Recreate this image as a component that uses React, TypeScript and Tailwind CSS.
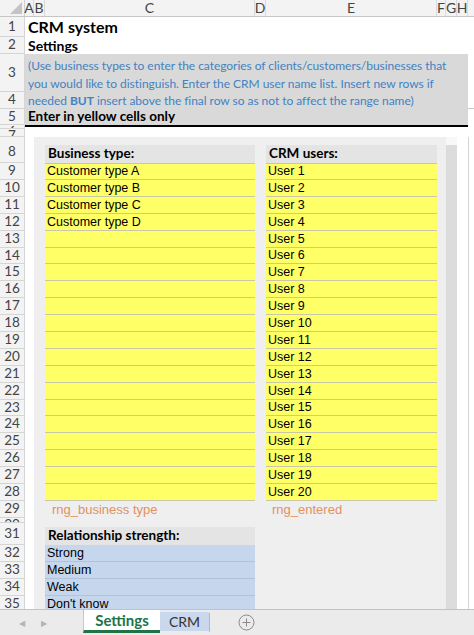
import React from "react";

function RowHead({ n, cls = "items-center" }: { n: number | string; cls?: string }) {
  return (
    <div
      className={`w-[25px] shrink-0 bg-[#f3f3f3] border-r border-b border-[#d5d5d5] text-[13.5px] leading-none text-[#444] flex justify-center overflow-hidden ${cls}`}
    >
      {n}
    </div>
  );
}

function PanelRow({
  h,
  n,
  headCls,
  c,
  e,
  gTop = false,
}: {
  h: string;
  n: number | string;
  headCls?: string;
  c?: React.ReactNode;
  e?: React.ReactNode;
  gTop?: boolean;
}) {
  return (
    <div className={`flex shrink-0 ${h}`}>
      <RowHead n={n} cls={headCls} />
      <div className="w-[9px] shrink-0 bg-white" />
      <div className="w-[11px] shrink-0 bg-[#efefef]" />
      <div className="w-[210px] shrink-0 bg-[#efefef] flex flex-col">{c}</div>
      <div className="w-[11px] shrink-0 bg-[#efefef]" />
      <div className="w-[171px] shrink-0 bg-[#efefef] flex flex-col">{e}</div>
      <div className="w-[9px] shrink-0 bg-[#efefef]" />
      <div className="w-[11px] shrink-0 flex flex-col bg-[#dcdcdc]">
        {gTop && <div className="h-[8px] bg-[#f8f8f8]" />}
      </div>
      <div className="w-[11px] shrink-0 bg-white" />
      <div className="flex-1 bg-white border-l border-[#d4d4d4]" />
    </div>
  );
}

function Yellow({ text, top = false }: { text?: string; top?: boolean }) {
  return (
    <div
      className={`flex-1 bg-[#ffff66] border-b border-[#c8c8a8] ${top ? "border-t" : ""} pl-[2px] flex items-center text-[12.5px] leading-none text-black font-['Liberation_Sans',Arial,sans-serif] whitespace-nowrap`}
    >
      {text}
    </div>
  );
}

function Blue({ text }: { text?: string }) {
  return (
    <div className="flex-1 bg-[#c6d7ed] border-b border-[#b3c3d6] pl-[2px] flex items-center text-[12.5px] leading-none text-black font-['Liberation_Sans',Arial,sans-serif] whitespace-nowrap">
      {text}
    </div>
  );
}

function HeadCell({ text }: { text: string }) {
  return (
    <>
      <div className="h-[8px] shrink-0" />
      <div className="flex-1 bg-[#e4e4e4] pl-[3px] flex items-center text-[13.5px] font-bold leading-none text-black whitespace-nowrap">
        {text}
      </div>
    </>
  );
}

export default function App() {
  const biz = ["Customer type A", "Customer type B", "Customer type C", "Customer type D"];
  const yRows = Array.from({ length: 20 }, (_, i) => i + 9);
  const blues = ["Strong", "Medium", "Weak", "Don't know"];
  return (
    <div className="w-[474px] h-[635px] overflow-hidden bg-white flex flex-col font-[Lato,sans-serif] text-black">
      <div className="h-[609px] shrink-0 overflow-hidden flex flex-col">
        {/* column headers */}
        <div className="flex h-[17px] shrink-0 bg-[#f3f3f3] border-b border-[#c6c6c6] text-[14px] leading-none text-[#444]">
          <div className="w-[25px] shrink-0 border-r border-[#d0d0d0] flex items-end justify-end pr-[2px] pb-[2px]">
            <svg width="12" height="12" viewBox="0 0 12 12">
              <polygon points="12,0 12,12 0,12" fill="#c4c4c4" />
            </svg>
          </div>
          <div className="w-[9px] shrink-0 border-r border-[#dadada] flex items-center justify-center">A</div>
          <div className="w-[11px] shrink-0 border-r border-[#dadada] flex items-center justify-center">B</div>
          <div className="w-[210px] shrink-0 border-r border-[#dadada] flex items-center justify-center">C</div>
          <div className="w-[11px] shrink-0 border-r border-[#dadada] flex items-center justify-center">D</div>
          <div className="w-[171px] shrink-0 border-r border-[#dadada] flex items-center justify-center">E</div>
          <div className="w-[9px] shrink-0 border-r border-[#dadada] flex items-center justify-center">F</div>
          <div className="w-[11px] shrink-0 border-r border-[#dadada] flex items-center justify-center">G</div>
          <div className="w-[11px] shrink-0 border-r border-[#dadada] flex items-center justify-center">H</div>
          <div className="flex-1" />
        </div>

        {/* row 1 */}
        <div className="flex h-[20px] shrink-0">
          <RowHead n={1} />
          <div className="flex-1 pl-[3px] flex items-center text-[16px] font-bold leading-none whitespace-nowrap">
            CRM system
          </div>
        </div>
        {/* row 2 */}
        <div className="flex h-[17px] shrink-0">
          <RowHead n={2} />
          <div className="flex-1 pl-[3px] flex items-center text-[14px] font-bold leading-none whitespace-nowrap">
            Settings
          </div>
        </div>
        {/* rows 3-4 */}
        <div className="flex h-[55px] shrink-0">
          <div className="flex flex-col w-[25px] shrink-0">
            <RowHead n={3} cls="items-center h-[38px]" />
            <RowHead n={4} cls="items-center h-[17px]" />
          </div>
          <div className="w-[443px] shrink-0 bg-[#d9d9d9] pl-[3px] pt-[3px] text-[12px] leading-[17.5px] text-[#4282c2] whitespace-nowrap tracking-[-0.04px]">
            <div>(Use business types to enter the categories of clients/customers/businesses that</div>
            <div>you would like to distinguish. Enter the CRM user name list. Insert new rows if</div>
            <div>
              needed <span className="font-bold">BUT</span> insert above the final row so as not to affect the range name)
            </div>
          </div>
          <div className="flex-1 border-b border-[#c8c8c8]" />
        </div>
        {/* row 5 */}
        <div className="flex h-[16px] shrink-0">
          <RowHead n={5} />
          <div className="w-[443px] shrink-0 bg-[#d9d9d9] pl-[3px] flex items-center text-[13.5px] font-bold leading-none whitespace-nowrap">
            Enter in yellow cells only
          </div>
          <div className="flex-1" />
        </div>
        {/* row 6 */}
        <div className="flex h-[4px] shrink-0">
          <RowHead n={6} cls="items-start" />
          <div className="w-[443px] shrink-0 flex flex-col">
            <div className="h-[2px] bg-black" />
          </div>
          <div className="flex-1" />
        </div>
        {/* row 7 */}
        <div className="flex h-[8px] shrink-0">
          <RowHead n={7} cls="items-start" />
          <div className="flex-1" />
        </div>
        {/* row 8 */}
        <PanelRow
          h="h-[26px]"
          n={8}
          headCls="items-end pb-[4px]"
          gTop
          c={<HeadCell text="Business type:" />}
          e={<HeadCell text="CRM users:" />}
        />
        {yRows.map((r, i) => (
          <PanelRow
            key={r}
            h={r === 14 || r === 23 ? "h-[16px]" : "h-[17px]"}
            n={r}
            c={<Yellow text={biz[i]} top={i === 0} />}
            e={<Yellow text={`User ${i + 1}`} top={i === 0} />}
          />
        ))}
        {/* row 29 */}
        <PanelRow
          h="h-[17px]"
          n={29}
          c={
            <div className="flex-1 pl-[7px] flex items-center text-[13px] leading-none text-[#e3915e] font-['Liberation_Sans',Arial,sans-serif] whitespace-nowrap">
              rng_business type
            </div>
          }
          e={
            <div className="flex-1 pl-[6px] flex items-center text-[13px] leading-none text-[#e3915e] font-['Liberation_Sans',Arial,sans-serif] whitespace-nowrap">
              rng_entered
            </div>
          }
        />
        {/* row 30 */}
        <PanelRow h="h-[5px]" n={30} headCls="items-start" />
        {/* row 31 */}
        <PanelRow
          h="h-[22px]"
          n={31}
          headCls="items-end pb-[4px]"
          c={
            <>
              <div className="h-[4px] shrink-0" />
              <div className="flex-1 bg-[#e4e4e4] pl-[3px] flex items-center text-[13.5px] font-bold leading-none whitespace-nowrap">
                Relationship strength:
              </div>
            </>
          }
        />
        {blues.map((b, i) => (
          <PanelRow key={b} h="h-[17px]" n={32 + i} c={<Blue text={b} />} />
        ))}
      </div>

      {/* tab bar */}
      <div className="h-[26px] shrink-0 bg-[#ebebeb] border-t border-[#c3c3c3] flex items-stretch">
        <div className="w-[83px] shrink-0 flex items-center">
          <span className="ml-[19px] text-[8px] text-[#b4b4b4]">◀</span>
          <span className="ml-[16px] text-[8px] text-[#b4b4b4]">▶</span>
        </div>
        <div className="w-[77px] shrink-0 bg-white border-l border-[#c8c8c8] border-b-[3px] border-b-[#217346] flex items-center justify-center text-[15px] font-bold text-[#217346] leading-none mb-[2px]">
          Settings
        </div>
        <div className="w-[49px] shrink-0 flex items-center py-[2px] mb-[2px]">
          <div className="w-full h-full bg-[#c9d8ec] flex items-center justify-center text-[14px] text-[#333] leading-none">
            CRM
          </div>
        </div>
        <div className="w-px bg-[#b8b8b8] my-[3px]" />
        <div className="flex-1 flex items-center pl-[28px]">
          <svg width="17" height="17" viewBox="0 0 17 17">
            <circle cx="8.5" cy="8.5" r="7.5" fill="none" stroke="#8a8a8a" strokeWidth="1" />
            <path d="M8.5 4.5v8M4.5 8.5h8" stroke="#8a8a8a" strokeWidth="1" />
          </svg>
        </div>
      </div>
    </div>
  );
}
